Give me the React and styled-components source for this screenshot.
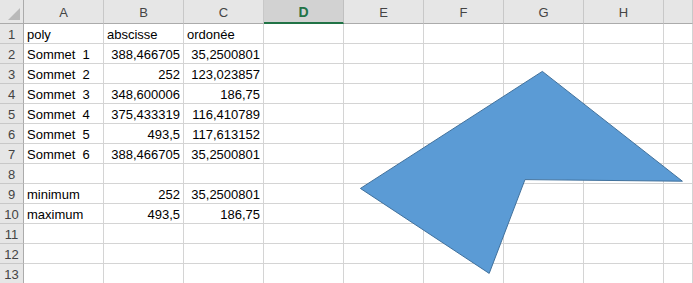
import React from 'react';
import styled, { createGlobalStyle } from 'styled-components';

const GlobalStyle = createGlobalStyle`
  html, body {
    margin: 0;
    padding: 0;
    background: #ffffff;
    overflow: hidden;
  }
  body {
    font-family: "Liberation Sans", Arial, sans-serif;
  }
`;

const Sheet = styled.div`
  position: relative;
  width: 693px;
  height: 283px;
  overflow: hidden;
  background: #fff;
`;

// last column (I) is only partly in view
const Grid = styled.div`
  display: grid;
  grid-template-columns: 24px repeat(8, 80px) 29px;
  grid-template-rows: 24px repeat(13, 20px);
  font-size: 13px;
  color: #000;
`;

const Corner = styled.div`
  position: relative;
  background: #e6e6e6;
  border-right: 1px solid #ababab;
  border-bottom: 1px solid #ababab;
  box-sizing: border-box;

  &::after {
    content: '';
    position: absolute;
    right: 3px;
    bottom: 3px;
    width: 0;
    height: 0;
    border-left: 12px solid transparent;
    border-bottom: 12px solid #b9b9b9;
  }
`;

const ColHead = styled.div`
  display: flex;
  align-items: center;
  justify-content: center;
  box-sizing: border-box;
  background: ${p => (p.$active ? '#d2d2d2' : '#e6e6e6')};
  border-right: 1px solid ${p => (p.$active ? '#c0c0c0' : '#c8c8c8')};
  border-bottom: ${p => (p.$active ? '2px solid #217346' : '1px solid #ababab')};
  color: ${p => (p.$active ? '#217346' : '#444')};
  font-weight: ${p => (p.$active ? 700 : 400)};
  font-size: ${p => (p.$active ? '14px' : '13px')};
  padding-top: 1px;
`;

const RowHead = styled.div`
  display: flex;
  align-items: center;
  justify-content: center;
  box-sizing: border-box;
  background: #e6e6e6;
  border-right: 1px solid #ababab;
  border-bottom: 1px solid #c8c8c8;
  color: #444;
  padding-top: 1px;
`;

const Cell = styled.div`
  display: flex;
  align-items: center;
  justify-content: ${p => (p.$num ? 'flex-end' : 'flex-start')};
  box-sizing: border-box;
  padding: 1px 3px 0 3px;
  border-right: 1px solid #d4d4d4;
  border-bottom: 1px solid #d4d4d4;
  white-space: pre;
`;

const Shape = styled.svg`
  position: absolute;
  left: 0;
  top: 0;
  pointer-events: none;
`;

const columns = ['A', 'B', 'C', 'D', 'E', 'F', 'G', 'H', ''];

const rows = [
  ['poly', 'abscisse', 'ordonée'],
  ['Sommet  1', 388.466705, 35.2500801],
  ['Sommet  2', 252, 123.023857],
  ['Sommet  3', 348.600006, 186.75],
  ['Sommet  4', 375.433319, 116.410789],
  ['Sommet  5', 493.5, 117.613152],
  ['Sommet  6', 388.466705, 35.2500801],
  [],
  ['minimum', 252, 35.2500801],
  ['maximum', 493.5, 186.75],
  [],
  [],
  [],
];

const fmt = v => String(v).replace('.', ',');

// points -> pixels, anchored on the top-left of cell A1
const toPx = v => 24.4 + (v * 4) / 3;
const vertices = rows.slice(1, 7).map(r => `${toPx(r[1])},${toPx(r[2])}`).join(' ');

export default function App() {
  return (
    <>
      <GlobalStyle />
      <Sheet>
        <Grid>
          <Corner />
          {columns.map((c, j) => (
            <ColHead key={j} $active={c === 'D'}>{c}</ColHead>
          ))}
          {rows.map((r, i) => (
            <React.Fragment key={i}>
              <RowHead>{i + 1}</RowHead>
              {columns.map((c, j) => {
                const v = r[j];
                const num = typeof v === 'number';
                return (
                  <Cell key={j} $num={num}>
                    {v === undefined ? '' : num ? fmt(v) : v}
                  </Cell>
                );
              })}
            </React.Fragment>
          ))}
        </Grid>
        <Shape width="693" height="283" viewBox="0 0 693 283">
          <polygon points={vertices} fill="#5b9bd5" stroke="#41719c" strokeWidth="1" />
        </Shape>
      </Sheet>
    </>
  );
}
